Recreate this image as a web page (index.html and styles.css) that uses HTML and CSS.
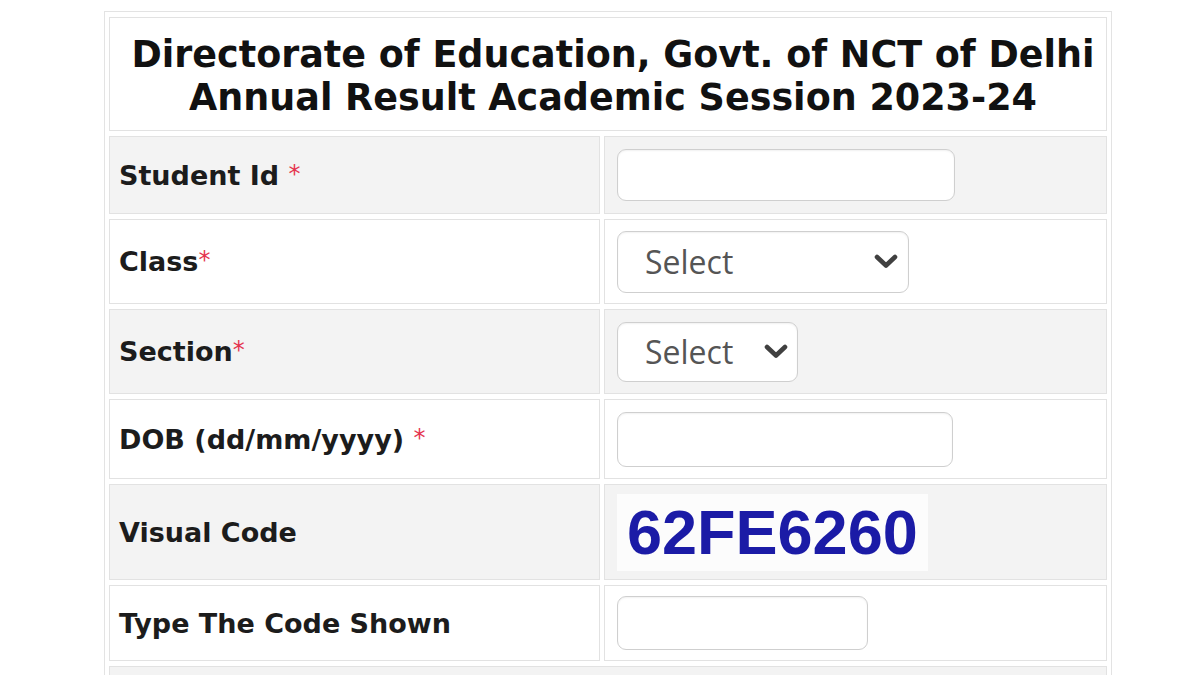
FILE: index.html
```html
<!DOCTYPE html>
<html lang="en">
<head>
    <meta charset="UTF-8">
    <meta name="viewport" content="width=device-width, initial-scale=1.0">
    <title>Annual Result Academic Session 2023-24</title>
    <link rel="stylesheet" href="styles.css">
</head>
<body>
    <form class="result-form" onsubmit="return false;">
        <table class="result-table">
            <tr class="head-row">
                <td colspan="2" class="head-cell">
                    Directorate of Education, Govt. of NCT of Delhi<br>
                    Annual Result Academic Session 2023-24
                </td>
            </tr>

            <!-- Student Id -->
            <tr class="row-alt row-id">
                <td class="label-cell">Student Id <span class="req">*</span></td>
                <td class="field-cell"><input type="text" class="field field-id"></td>
            </tr>

            <!-- Class -->
            <tr class="row-class">
                <td class="label-cell">Class<span class="req">*</span></td>
                <td class="field-cell">
                    <div class="select-wrap select-class">
                        <select class="field field-select">
                            <option>Select</option>
                        </select>
                        <svg class="chevron" viewBox="0 0 24 15" width="24" height="15">
                            <path d="M3 3 L12 11.5 L21 3" fill="none" stroke="#404040" stroke-width="4.6" stroke-linecap="round" stroke-linejoin="round"/>
                        </svg>
                    </div>
                </td>
            </tr>

            <!-- Section -->
            <tr class="row-alt row-section">
                <td class="label-cell">Section<span class="req">*</span></td>
                <td class="field-cell">
                    <div class="select-wrap select-section">
                        <select class="field field-select">
                            <option>Select</option>
                        </select>
                        <svg class="chevron" viewBox="0 0 24 15" width="24" height="15">
                            <path d="M3 3 L12 11.5 L21 3" fill="none" stroke="#404040" stroke-width="4.6" stroke-linecap="round" stroke-linejoin="round"/>
                        </svg>
                    </div>
                </td>
            </tr>

            <!-- DOB -->
            <tr class="row-dob">
                <td class="label-cell">DOB (dd/mm/yyyy) <span class="req">*</span></td>
                <td class="field-cell"><input type="text" class="field field-dob"></td>
            </tr>

            <!-- Visual Code -->
            <tr class="row-alt row-code">
                <td class="label-cell">Visual Code</td>
                <td class="field-cell"><span class="captcha">62FE6260</span></td>
            </tr>

            <!-- Type Code -->
            <tr class="row-type">
                <td class="label-cell">Type The Code Shown</td>
                <td class="field-cell"><input type="text" class="field field-code"></td>
            </tr>

            <tr class="row-alt row-submit">
                <td colspan="2" class="submit-cell"></td>
            </tr>
        </table>
    </form>
</body>
</html>
```

FILE: styles.css
```css
* {
    margin: 0;
    padding: 0;
    box-sizing: border-box;
}
body {
    background: #fff;
    font-family: 'DejaVu Sans', Verdana, sans-serif;
    color: #1a1a1a;
    overflow: hidden;
}
.result-form {
    padding: 11px 0 0 104px;
}
.result-table {
    width: 1008px;
    border: 1px solid #e3e3e3;
    border-spacing: 4px 5px;
}
.result-table td {
    border: 1px solid #e2e2e2;
    padding: 0 12px;
    vertical-align: middle;
}
.head-cell {
    height: 114px;
    text-align: center;
    font-size: 36.5px;
    font-weight: bold;
    line-height: 43px;
    padding: 4px 0 0 10px !important;
    color: #111;
}
.row-alt td {
    background: #f3f3f3;
}
.label-cell {
    width: 491px;
    font-size: 27px;
    font-weight: bold;
    color: #1c1c1c;
    padding-left: 9px !important;
}
.label-cell .req {
    color: #e5334f;
    font-weight: normal;
    font-size: 24px;
    vertical-align: 3px;
}
.row-id td { height: 78px; }
.row-class td { height: 85px; }
.row-section td { height: 85px; }
.row-dob td { height: 80px; }
.row-code td { height: 96px; }
.row-type td { height: 76px; }
.row-submit td { height: 60px; }

.field {
    display: block;
    background: #fff;
    border: 1px solid #cfcfcf;
    border-radius: 9px;
    box-shadow: inset 0 1px 2px rgba(0, 0, 0, 0.06);
    outline: none;
}
.field-id {
    width: 338px;
    height: 52px;
}
.field-dob {
    width: 336px;
    height: 55px;
}
.field-code {
    width: 251px;
    height: 54px;
}
.select-wrap {
    position: relative;
}
.field-select {
    appearance: none;
    -webkit-appearance: none;
    width: 100%;
    height: 100%;
    padding-left: 27px;
    font-family: 'Open Sans', sans-serif;
    font-size: 32px;
    color: #555;
}
.select-class {
    width: 292px;
    height: 62px;
}
.select-section {
    width: 181px;
    height: 60px;
}
.chevron {
    position: absolute;
    top: 50%;
    right: 11px;
    margin-top: -8px;
}
.select-section .chevron {
    right: 10px;
}
.captcha {
    display: inline-block;
    background: #fcfcfc;
    padding: 3px 10px 4px 10px;
    font-family: 'Liberation Sans', Arial, sans-serif;
    font-size: 63px;
    font-weight: bold;
    line-height: 70px;
    color: #1b1ba6;
}
```
